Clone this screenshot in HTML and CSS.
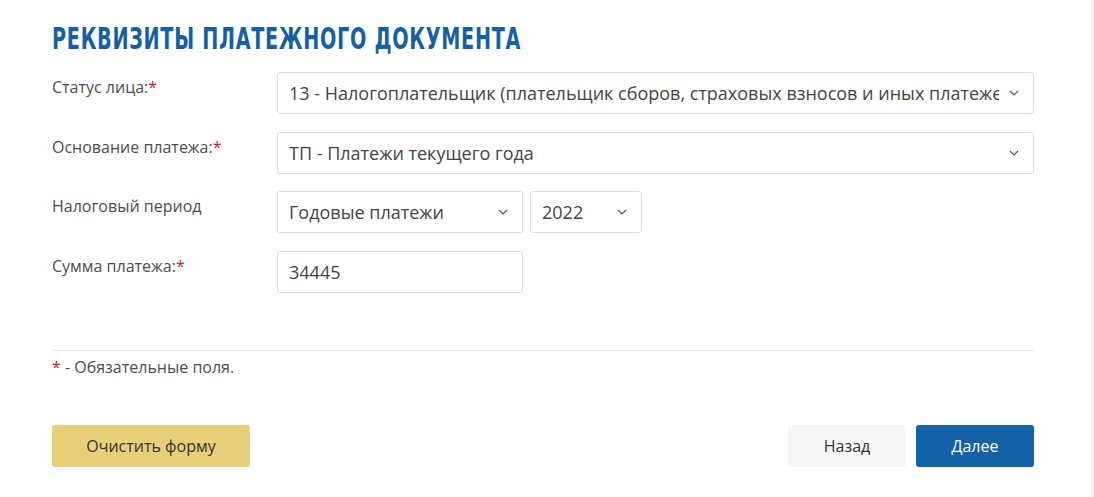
FILE: index.html
```html
<!DOCTYPE html>
<html lang="ru">
<head>
<meta charset="utf-8">
<title>Реквизиты платежного документа</title>
<link rel="stylesheet" href="styles.css">
</head>
<body>
<div class="page">
  <main class="main">
    <h1 class="title"><span class="title-text">РЕКВИЗИТЫ ПЛАТЕЖНОГО ДОКУМЕНТА</span></h1>
    <form class="form">
      <div class="row">
        <div class="label">Статус лица:<span class="req">*</span></div>
        <div class="fields">
          <div class="select select-wide">
            <span class="select-value">13 - Налогоплательщик (плательщик сборов, страховых взносов и иных платежей)</span>
            <svg class="chev" width="10" height="6" viewBox="0 0 10 6"><polyline points="1,1 5,5 9,1" fill="none" stroke="#555" stroke-width="1.2"/></svg>
          </div>
        </div>
      </div>
      <div class="row">
        <div class="label">Основание платежа:<span class="req">*</span></div>
        <div class="fields">
          <div class="select select-wide">
            <span class="select-value">ТП - Платежи текущего года</span>
            <svg class="chev" width="10" height="6" viewBox="0 0 10 6"><polyline points="1,1 5,5 9,1" fill="none" stroke="#555" stroke-width="1.2"/></svg>
          </div>
        </div>
      </div>
      <div class="row">
        <div class="label">Налоговый период</div>
        <div class="fields">
          <div class="select select-mid">
            <span class="select-value">Годовые платежи</span>
            <svg class="chev" width="10" height="6" viewBox="0 0 10 6"><polyline points="1,1 5,5 9,1" fill="none" stroke="#555" stroke-width="1.2"/></svg>
          </div>
          <div class="select select-small">
            <span class="select-value">2022</span>
            <svg class="chev" width="10" height="6" viewBox="0 0 10 6"><polyline points="1,1 5,5 9,1" fill="none" stroke="#555" stroke-width="1.2"/></svg>
          </div>
        </div>
      </div>
      <div class="row">
        <div class="label">Сумма платежа:<span class="req">*</span></div>
        <div class="fields">
          <input class="input" type="text" value="34445">
        </div>
      </div>
    </form>
    <div class="divider"></div>
    <p class="note"><span class="req">*</span> - Обязательные поля.</p>
    <div class="actions">
      <button class="btn btn-clear" type="button">Очистить форму</button>
      <div class="actions-right">
        <button class="btn btn-back" type="button">Назад</button>
        <button class="btn btn-next" type="button">Далее</button>
      </div>
    </div>
  </main>
  <aside class="side"></aside>
</div>
</body>
</html>
```

FILE: styles.css
```css
* { box-sizing: border-box; }
html, body { margin: 0; padding: 0; background: #fff; }
body {
  font-family: "Open Sans", "Liberation Sans", sans-serif;
  color: #4a4a4a;
}
.page {
  display: flex;
  width: 1094px;
  height: 497px;
}
.main {
  flex: 1;
  padding: 22px 56px 0 52px;
}
.side {
  width: 4px;
  background: #f2f2f2;
}
.title {
  margin: 0;
  height: 34px;
  line-height: 34px;
  font-family: "DejaVu Sans Condensed", "DejaVu Sans", sans-serif;
  font-weight: bold;
  font-size: 30px;
  color: #1460a5;
  white-space: nowrap;
}
.title-text {
  display: inline-block;
  letter-spacing: 1px;
  transform: scaleX(0.712);
  transform-origin: left center;
}
.form {
  margin-top: 16px;
  display: flex;
  flex-direction: column;
  gap: 17.7px;
}
.row {
  display: flex;
  align-items: flex-start;
}
.label {
  width: 225px;
  padding-top: 4px;
  font-size: 16px;
  line-height: 22px;
  color: #4d4d4d;
}
.req { color: #d0202a; }
.fields {
  display: flex;
  gap: 7px;
}
.select, .input {
  height: 42px;
  border: 1px solid #dcdcdc;
  border-radius: 3px;
  background: #fff;
  font-family: "Open Sans", "Liberation Sans", sans-serif;
  font-size: 18px;
  color: #444;
}
.select {
  display: flex;
  align-items: center;
  padding: 0 14px 0 11px;
}
.select-value {
  flex: 1;
  overflow: hidden;
  white-space: nowrap;
  text-overflow: clip;
}
.chev { flex: none; margin-left: 10px; }
.select-wide { width: 757px; }
.select-mid { width: 246px; }
.select-small { width: 112px; }
.input {
  width: 246px;
  padding: 0 11px;
  outline: none;
}
.divider {
  margin-top: 57px;
  height: 1px;
  background: #e6e6e6;
}
.note {
  margin: 5px 0 0;
  font-size: 16px;
  line-height: 22px;
  color: #4d4d4d;
}
.actions {
  margin-top: 47px;
  display: flex;
  justify-content: space-between;
}
.actions-right {
  display: flex;
  gap: 10px;
}
.btn {
  height: 42px;
  border: none;
  border-radius: 3px;
  font-family: "Open Sans", "Liberation Sans", sans-serif;
  font-size: 16px;
  cursor: pointer;
}
.btn-clear {
  width: 198px;
  background: #e8cf79;
  color: #333;
}
.btn-back {
  width: 118px;
  background: #f6f6f6;
  color: #333;
}
.btn-next {
  width: 118px;
  background: #1461a6;
  color: #fff;
}
```
